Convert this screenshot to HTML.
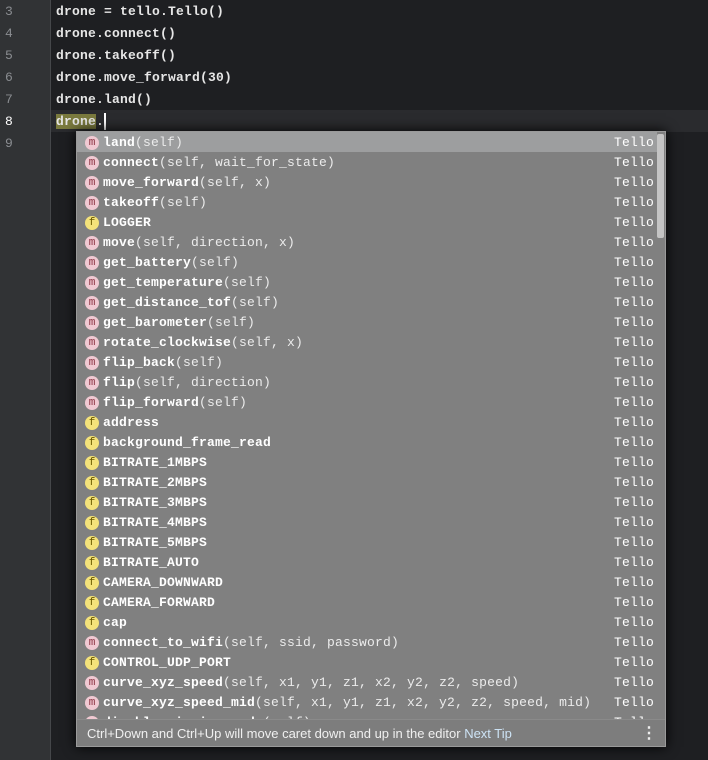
<!DOCTYPE html>
<html><head><meta charset="utf-8"><style>
body{margin:0;width:708px;height:760px;background:#1e1f22;overflow:hidden;position:relative;font-family:"Liberation Mono",monospace;font-size:13px;font-weight:bold;letter-spacing:0.2px}
.g{position:absolute;left:0;top:0;width:50px;height:760px;background:#313335;border-right:1px solid #45474a}
.ln{position:absolute;left:5px;color:#8a8d91;font-weight:normal;line-height:22px;margin-top:1px}
.cl{position:absolute;left:56px;color:#e6e6e6;line-height:22px;white-space:pre;margin-top:1px}
.cur{position:absolute;left:0;top:110px;width:708px;height:22px;background:#2a2b2e}
.pop{position:absolute;left:76px;top:131px;width:590px;height:616px;background:#808080;border:1px solid #9a9a9a;box-sizing:border-box;box-shadow:0 0 12px #000}
.r{position:absolute;left:0;width:580px;height:20px;line-height:21px;white-space:pre;color:#fff}
.r.s{background:#9d9e9f}
.i{position:absolute;left:8px;top:4px;width:14px;height:14px;border-radius:50%;font-size:11px;line-height:14px;text-align:center;color:#8a3040;background:#f0c9d2;letter-spacing:0;font-weight:normal}
.i.f{background:#f4e27a;color:#6b5a00}
.t{position:absolute;left:26px}
.p{color:#ececec;font-weight:normal}
.c{position:absolute;left:537px;color:#fff;font-weight:normal}
.sb{position:absolute;left:580px;top:2px;width:7px;height:104px;background:#c4c4c4;border-radius:2px}
.ft{position:absolute;left:0;bottom:0;width:100%;height:27px;background:#7d7d7d;border-top:1px solid #8a8a8a;font-family:"Liberation Sans",sans-serif;font-weight:normal;font-size:13px;letter-spacing:0;color:#f0f0f0;line-height:28px;padding-left:10px;box-sizing:border-box}
.ft span{color:#cde3f5}
</style></head><body>
<div class="cur"></div>
<div class="g"></div>
<div class="ln" style="top:0">3</div><div class="ln" style="top:22px">4</div><div class="ln" style="top:44px">5</div><div class="ln" style="top:66px">6</div><div class="ln" style="top:88px">7</div><div class="ln" style="top:110px;color:#fff">8</div><div class="ln" style="top:132px">9</div>
<div class="cl" style="top:0">drone = tello.Tello()</div>
<div class="cl" style="top:22px">drone.connect()</div>
<div class="cl" style="top:44px">drone.takeoff()</div>
<div class="cl" style="top:66px">drone.move_forward(30)</div>
<div class="cl" style="top:88px">drone.land()</div>
<div class="cl" style="top:110px"><span style="background:#7a7a3e">drone</span>.<span style="display:inline-block;width:2px;height:17px;background:#fff;vertical-align:middle"></span></div>
<div class="pop" id="pop">
<div class="sb"></div>
<div class="ft">Ctrl+Down and Ctrl+Up will move caret down and up in the editor <span>Next Tip</span><b style="position:absolute;right:8px;top:0;font-size:16px;color:#eee">⋮</b></div>
</div>
<script>
var d=[["m","land","(self)"],["m","connect","(self, wait_for_state)"],["m","move_forward","(self, x)"],["m","takeoff","(self)"],["f","LOGGER",""],["m","move","(self, direction, x)"],["m","get_battery","(self)"],["m","get_temperature","(self)"],["m","get_distance_tof","(self)"],["m","get_barometer","(self)"],["m","rotate_clockwise","(self, x)"],["m","flip_back","(self)"],["m","flip","(self, direction)"],["m","flip_forward","(self)"],["f","address",""],["f","background_frame_read",""],["f","BITRATE_1MBPS",""],["f","BITRATE_2MBPS",""],["f","BITRATE_3MBPS",""],["f","BITRATE_4MBPS",""],["f","BITRATE_5MBPS",""],["f","BITRATE_AUTO",""],["f","CAMERA_DOWNWARD",""],["f","CAMERA_FORWARD",""],["f","cap",""],["m","connect_to_wifi","(self, ssid, password)"],["f","CONTROL_UDP_PORT",""],["m","curve_xyz_speed","(self, x1, y1, z1, x2, y2, z2, speed)"],["m","curve_xyz_speed_mid","(self, x1, y1, z1, x2, y2, z2, speed, mid)"],["m","disable_mission_pads","(self)"]];
var p=document.getElementById('pop'),h='<div style="position:absolute;left:0;top:0;width:580px;height:588px;overflow:hidden">';
d.forEach(function(e,k){h+='<div class="r'+(k==0?' s':'')+'" style="top:'+(k*20)+'px"><span class="i '+e[0]+'">'+e[0]+'</span><span class="t">'+e[1]+'<span class="p">'+e[2]+'</span></span><span class="c">Tello</span></div>'});
p.insertAdjacentHTML('afterbegin',h+'</div>');
</script>
</body></html>
